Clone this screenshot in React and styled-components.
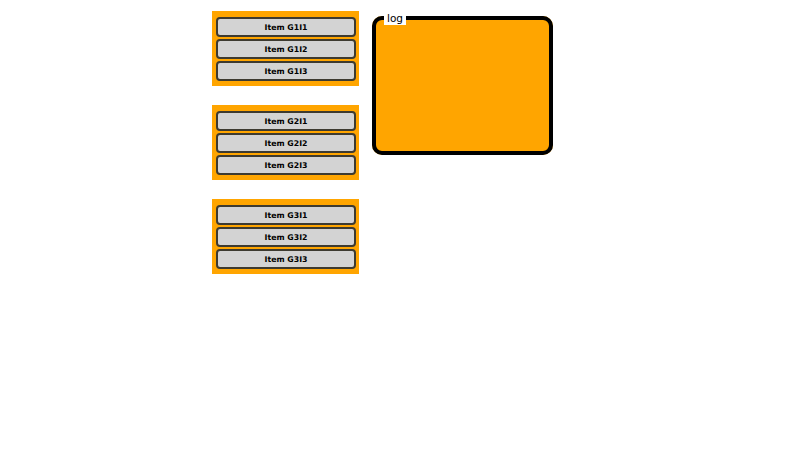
import React from "react";
import styled, {createGlobalStyle} from "styled-components";

const GlobalStyle = createGlobalStyle`
  body {
    margin: 8px;
    background: #ffffff;
    font-family: "DejaVu Sans", sans-serif;
  }
`;

const Page = styled.div`
  display: flex;
  align-items: flex-start;
  gap: 13px;
  padding: 3px 0 0 204px;
`;

const Column = styled.div`
  display: flex;
  flex-direction: column;
  gap: 19px;
  width: 147px;
`;

const Group = styled.div`
  display: flex;
  flex-direction: column;
  gap: 2px;
  padding: 6px 3px 5px 4px;
  background: orange;
`;

const Item = styled.button`
  height: 20px;
  margin: 0;
  padding: 0;
  border: 2px solid #3d3a30;
  border-radius: 4px;
  background: lightgray;
  color: #000000;
  font-family: "DejaVu Sans", sans-serif;
  font-weight: bold;
  font-size: 7.8px;
  cursor: pointer;
`;

const Log = styled.fieldset`
  box-sizing: border-box;
  width: 181px;
  height: 144px;
  margin: 0;
  padding: 0 8px;
  border: 4px solid #000000;
  border-radius: 10px;
  background: orange;
`;

const Legend = styled.legend`
  padding: 0 3px;
  background: #ffffff;
  font-family: "DejaVu Sans", sans-serif;
  font-size: 10.5px;
  line-height: 14px;
  color: #000000;
`;

const groups = ["G1", "G2", "G3"];
const items = ["I1", "I2", "I3"];

export default function App() {
  return (
    <>
      <GlobalStyle/>
      <Page>
        <Column>
          {groups.map((g) => (
            <Group key={g}>
              {items.map((i) => (
                <Item key={i}>Item {g}{i}</Item>
              ))}
            </Group>
          ))}
        </Column>
        <Log>
          <Legend>log</Legend>
        </Log>
      </Page>
    </>
  );
}
